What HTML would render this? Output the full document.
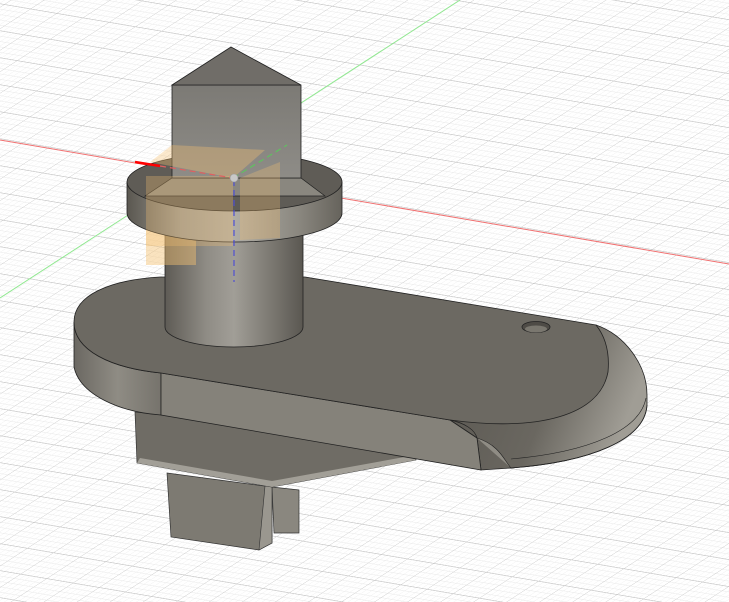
<!DOCTYPE html>
<html><head><meta charset="utf-8"><style>
html,body{margin:0;padding:0;background:#fff;width:729px;height:602px;overflow:hidden}
</style></head><body>
<svg width="729" height="602" viewBox="0 0 729 602" xmlns="http://www.w3.org/2000/svg">
<defs>
<pattern id="minor" width="5.24" height="4.28" patternUnits="userSpaceOnUse" patternTransform="matrix(1,0.17,-1.538,1,233,178)">
<path d="M0 0H5.24M0 0V4.28" stroke="#e9e9e9" stroke-width="0.8" fill="none"/>
</pattern>
<pattern id="major" width="26.2" height="21.4" patternUnits="userSpaceOnUse" patternTransform="matrix(1,0.17,-1.538,1,233,178)">
<path d="M0 0H26.2M0 0V21.4" stroke="#c4c4c4" stroke-width="0.9" fill="none"/>
</pattern>
<linearGradient id="cyl" x1="0" x2="1">
<stop offset="0" stop-color="#5e5b55"/><stop offset="0.3" stop-color="#8f8c85"/><stop offset="0.5" stop-color="#a19e97"/><stop offset="0.8" stop-color="#77746d"/><stop offset="1" stop-color="#5a5751"/>
</linearGradient>
<linearGradient id="fl" x1="0" x2="1">
<stop offset="0" stop-color="#5a5750"/><stop offset="0.25" stop-color="#9b9890"/><stop offset="0.5" stop-color="#b0ada5"/><stop offset="0.8" stop-color="#8a877f"/><stop offset="1" stop-color="#66635c"/>
</linearGradient>
<linearGradient id="side" x1="0" x2="1">
<stop offset="0" stop-color="#6b6862"/><stop offset="0.5" stop-color="#8f8c84"/><stop offset="1" stop-color="#76736c"/>
</linearGradient>
<linearGradient id="rim" x1="0" y1="0" x2="1" y2="0.3">
<stop offset="0" stop-color="#5a5751"/><stop offset="0.6" stop-color="#6a6760"/><stop offset="1" stop-color="#a09d95"/>
</linearGradient>
<linearGradient id="pr" x1="0" y1="0" x2="0" y2="1">
<stop offset="0" stop-color="#7c7a75"/><stop offset="1" stop-color="#8e8c87"/>
</linearGradient>
</defs>
<rect width="729" height="602" fill="#fff"/>
<rect width="729" height="602" fill="url(#minor)"/>
<rect width="729" height="602" fill="url(#major)"/>
<line x1="0" y1="140" x2="729" y2="264" stroke="#f07070" stroke-width="1"/>
<line x1="0" y1="298" x2="460" y2="0" stroke="#90e890" stroke-width="1"/>

<!-- lower block -->
<polygon points="272,487 299,490 299,533 274,533" fill="#8a877f" stroke="#333" stroke-width="0.7"/>
<polygon points="167,473 272,487 272,543 259,550 171,537" fill="#7d7a72" stroke="#333" stroke-width="0.7"/>
<polygon points="259,550 272,543 272,487 265,486 259,550" fill="#9a978f" stroke="#333" stroke-width="0.6"/>
<!-- under box -->
<polygon points="135,412 416,440 416,460 272,487 137,463" fill="#6f6c65" stroke="#333" stroke-width="0.7"/>
<polygon points="137,463 272,487 416,460 410,456 272,481 140,458" fill="#a29f97"/>

<!-- plate right flange/rim -->
<path d="M596,325 C625,335 647,365 647,395 L647,405 C645,440 590,462 511,468 L481,470 L477,438 L450,420 Z" fill="url(#rim)" stroke="#222" stroke-width="0.8"/>
<path d="M477,438 C500,445 505,462 511,468" fill="#8f8c84" stroke="#222" stroke-width="0.6"/>
<path d="M511,468 C590,462 645,440 647,405" fill="none" stroke="#222" stroke-width="0.8"/>
<path d="M511,459 C590,452 640,430 646,398" fill="none" stroke="#222" stroke-width="0.6"/>
<!-- plate left side -->
<path d="M74,322 L74,367 C80,395 120,412 161,415 L161,373 C110,368 74,350 74,322 Z" fill="url(#side)" stroke="#222" stroke-width="0.8"/>
<!-- front face -->
<polygon points="161,373 450,420 477,438 481,470 161,415" fill="#85827a" stroke="#222" stroke-width="0.8"/>
<!-- top face -->
<path d="M74,322 C74,295 110,280 160,277 L305,277 L596,325 C604,335 610,350 608,372 C600,415 540,432 450,420 L161,373 C110,368 74,350 74,322 Z" fill="#6c6962" stroke="#222" stroke-width="0.8"/>
<path d="M450,420 C465,423 475,430 477,438" fill="none" stroke="#222" stroke-width="0.7"/>
<ellipse cx="536" cy="327" rx="14" ry="5.5" fill="#4e4b46" stroke="#222" stroke-width="0.8"/>
<ellipse cx="536" cy="329" rx="11" ry="3.5" fill="#7a776f"/>

<!-- cylinder -->
<path d="M165,200 L165,327 A69,20 0 0 0 303,327 L303,200 Z" fill="url(#cyl)" stroke="#222" stroke-width="0.8"/>
<rect x="146" y="205" width="50" height="60" fill="#f5c070" opacity="0.45"/>
<!-- flange -->
<path d="M127,182 L127,213 A107.5,29 0 0 0 342,213 L342,182 Z" fill="url(#fl)" stroke="#222" stroke-width="0.8"/>
<ellipse cx="234.5" cy="182" rx="107.5" ry="29" fill="#5f5c56" stroke="#222" stroke-width="0.8"/>
<path d="M145,196 L172,178 L301,178 L325,196 Z" fill="#8a877f" stroke="#222" stroke-width="0.7"/>
<!-- prism -->
<polygon points="172,85 301,85 301,178 172,178" fill="url(#pr)" stroke="#222" stroke-width="0.8"/>
<polygon points="172,85 231,47 301,85" fill="#706d68" stroke="#222" stroke-width="0.8"/>
<!-- orange planes -->
<polygon points="150,162 172,145 265,150 233,178" fill="#f5c070" opacity="0.35"/>
<rect x="146" y="176" width="87" height="70" fill="#f5c070" opacity="0.3"/>
<polygon points="240,178 280,162 280,238 240,240" fill="#f5c070" opacity="0.3"/>
<line x1="135" y1="162" x2="160" y2="166" stroke="#ff0000" stroke-width="2.5"/>
<line x1="160" y1="166" x2="233" y2="178" stroke="#e06060" stroke-width="1.2" stroke-dasharray="6,4"/>
<line x1="233" y1="178" x2="287" y2="145" stroke="#60c060" stroke-width="1.2" stroke-dasharray="6,4"/>
<line x1="234" y1="180" x2="234" y2="282" stroke="#5050d0" stroke-width="1.2" stroke-dasharray="6,4"/>
<circle cx="234" cy="178" r="4" fill="#c8c8c8" stroke="#999" stroke-width="0.6"/>
</svg>
</body></html>
